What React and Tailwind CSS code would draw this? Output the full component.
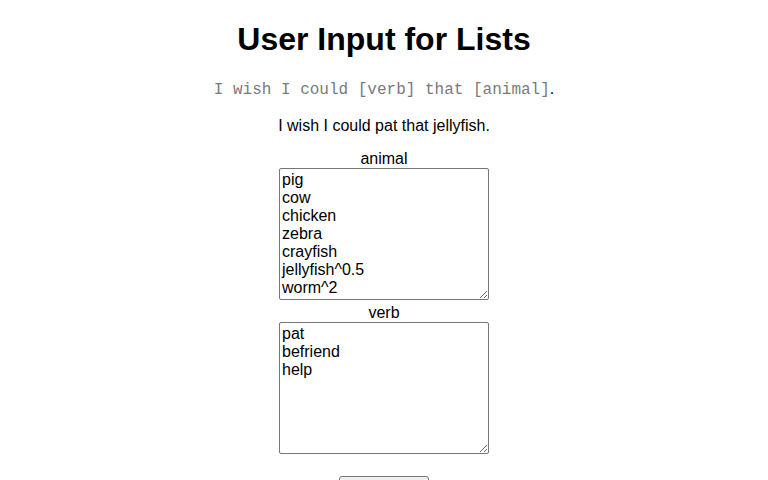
export default function App() {
  return (
    <div className="flex flex-col items-center font-['Liberation_Sans',Arial,sans-serif] text-black bg-white min-h-[480px]">
      <h1 className="mt-[21px] text-[32px] font-bold leading-[37px]">User Input for Lists</h1>
      <p className="mt-[22px] text-[16px] leading-[18px]">
        <code className="font-['Liberation_Mono','Courier_New',monospace] text-[#7a7a7a] text-[16px] font-light">I wish I could [verb] that [animal]</code>
        <span>.</span>
      </p>
      <p className="mt-[18px] text-[16px] leading-[18px]">I wish I could pat that jellyfish.</p>
      <label className="mt-[15px] text-[16px] leading-[18px] h-[18px]">animal</label>
      <textarea
        className="mt-[0px] w-[210px] h-[132px] border border-[#767676] rounded-[2px] px-[2px] pt-[2px] text-[16px] leading-[18px] font-['Liberation_Sans',Arial,sans-serif] resize-y outline-none"
        defaultValue={"pig\ncow\nchicken\nzebra\ncrayfish\njellyfish^0.5\nworm^2"}
      />
      <label className="mt-[4px] text-[16px] leading-[18px] h-[18px]">verb</label>
      <textarea
        className="mt-[0px] w-[210px] h-[132px] border border-[#767676] rounded-[2px] px-[2px] pt-[2px] text-[16px] leading-[18px] font-['Liberation_Sans',Arial,sans-serif] resize-y outline-none"
        defaultValue={"pat\nbefriend\nhelp"}
      />
      <button aria-label="Generate" className="mt-[22px] w-[90px] h-[26px] border border-[#767676] rounded-[3px] bg-[#efefef] text-[13px]"></button>
    </div>
  );
}
